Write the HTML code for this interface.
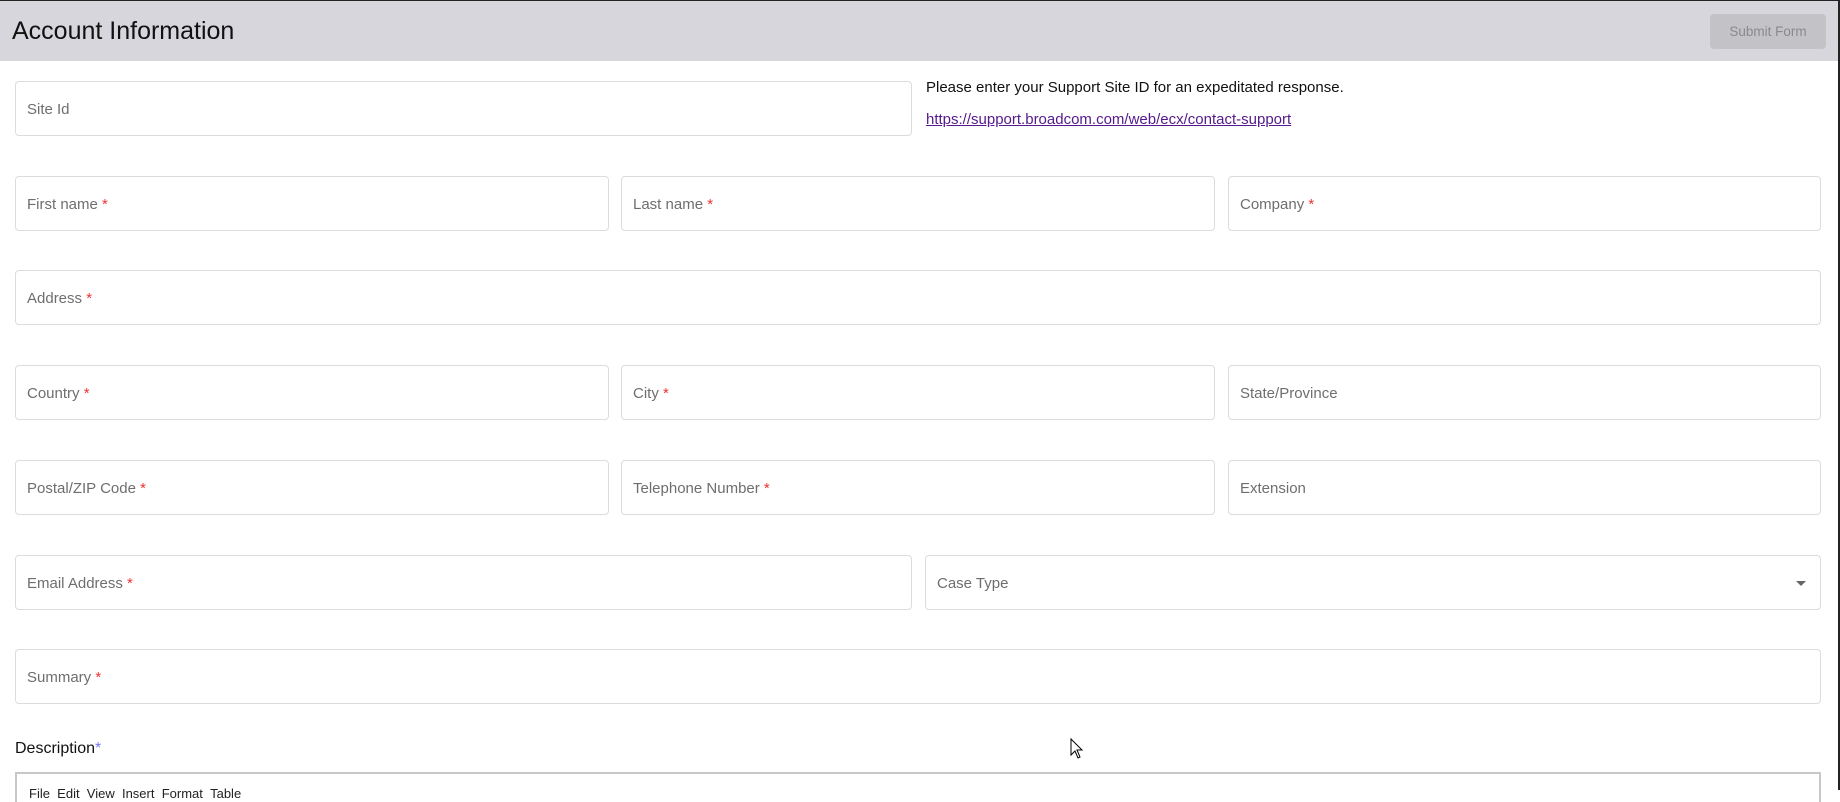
<!DOCTYPE html>
<html><head><style>
*{box-sizing:border-box;margin:0;padding:0}
body{width:1840px;height:790px;overflow:hidden;background:#fff;font-family:"Liberation Sans",sans-serif;position:relative}
.frame{position:absolute;left:0;top:0;width:1840px;height:1px;background:#222}
.rb{position:absolute;right:0;top:0;width:2px;height:790px;background:#222}
.hdr{position:absolute;left:0;top:1px;width:1838px;height:60px;background:#d7d6dc}
.hdr h1{position:absolute;left:12px;top:16px;font-size:25px;font-weight:normal;color:#111}
.btn{position:absolute;left:1710px;top:13px;width:116px;height:35px;background:#c3c3c7;border-radius:4px;color:#8a8a8d;font-size:13.5px;text-align:center;line-height:35px}
.in{position:absolute;height:55px;border:1px solid #dcdcdc;border-radius:4px;font-size:15px;color:#6e6e6e;padding-left:11px;line-height:55px}
.in b{color:#e33;font-weight:normal}
.t1{position:absolute;left:926px;top:79px;font-size:15px;color:#111}
.t2{position:absolute;left:926px;top:111px;font-size:15px;color:#551a8b;text-decoration:underline}
.c1{left:15px;width:594px}.c2{left:621px;width:594px}.c3{left:1228px;width:593px}
.full{left:15px;width:1806px}
</style></head><body>
<div class="frame"></div><div class="rb"></div>
<div class="hdr"><h1>Account Information</h1><div class="btn">Submit Form</div></div>
<div class="in" style="left:15px;width:897px;top:81px">Site Id</div>
<div class="t1">Please enter your Support Site ID for an expeditated response.</div>
<div class="t2">https://support.broadcom.com/web/ecx/contact-support</div>
<div class="in c1" style="top:176px">First name <b>*</b></div>
<div class="in c2" style="top:176px">Last name <b>*</b></div>
<div class="in c3" style="top:176px">Company <b>*</b></div>
<div class="in full" style="top:270px">Address <b>*</b></div>
<div class="in c1" style="top:365px">Country <b>*</b></div>
<div class="in c2" style="top:365px">City <b>*</b></div>
<div class="in c3" style="top:365px">State/Province</div>
<div class="in c1" style="top:460px">Postal/ZIP Code <b>*</b></div>
<div class="in c2" style="top:460px">Telephone Number <b>*</b></div>
<div class="in c3" style="top:460px">Extension</div>
<div class="in" style="left:15px;width:897px;top:555px">Email Address <b>*</b></div>
<div class="in" style="left:925px;width:896px;top:555px">Case Type<span style="position:absolute;right:14px;top:25px;width:0;height:0;border-left:5px solid transparent;border-right:5px solid transparent;border-top:5px solid #666"></span></div>
<div class="in full" style="top:649px">Summary <b>*</b></div>
<div style="position:absolute;left:15px;top:740px;font-size:16px;color:#111">Description<span style="color:#7b7bf0">*</span></div>
<div style="position:absolute;left:15px;top:772px;width:1806px;height:30px;border:2px solid #c8c8c8;border-bottom:none;overflow:hidden"><span style="position:absolute;left:12px;top:12px;font-size:13px;color:#222">File &nbsp;Edit &nbsp;View &nbsp;Insert &nbsp;Format &nbsp;Table</span></div>
<svg style="position:absolute;left:1070px;top:738px" width="14" height="22" viewBox="0 0 14 22"><path d="M1 1 L1 17 L5 13 L8 20 L10 19 L7 12 L12 12 Z" fill="#fff" stroke="#000" stroke-width="1"/></svg>
</body></html>
